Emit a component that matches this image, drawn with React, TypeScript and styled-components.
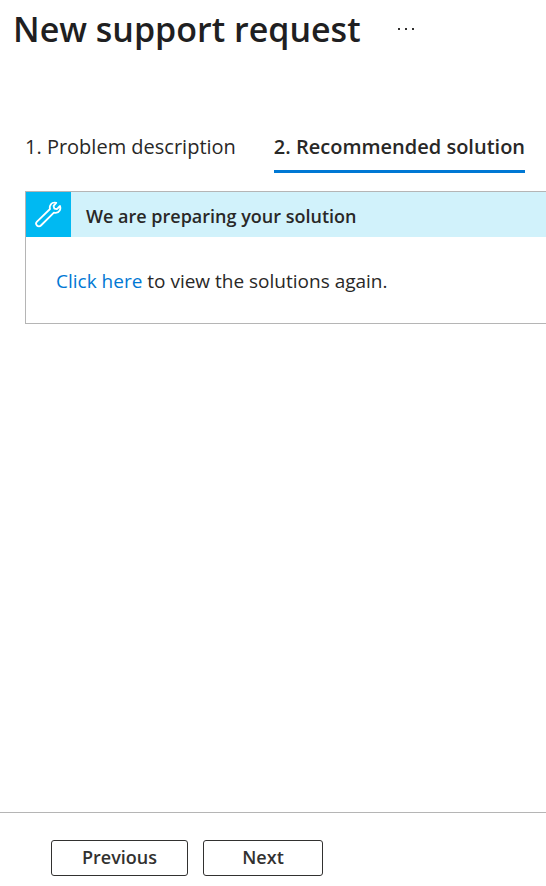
import React from "react";
import styled, { createGlobalStyle } from "styled-components";

const GlobalStyle = createGlobalStyle`
  *, *::before, *::after { box-sizing: border-box; }
  body {
    margin: 0;
    background: #fff;
    color: #292827;
    font-family: "Open Sans", "Noto Sans", sans-serif;
    font-size: 19px;
    line-height: 28px;
  }
`;

const Page = styled.div`
  display: flex;
  flex-direction: column;
  min-height: 100vh;
  overflow-x: hidden;
`;

const Header = styled.header`
  display: flex;
  align-items: center;
  gap: 30px;
  padding: 5px 13px 0;
`;

const Title = styled.h1`
  margin: 0;
  color: #1f1f22;
  font-size: 34px;
  line-height: 48px;
  font-weight: 600;
  white-space: nowrap;
`;

const MoreButton = styled.button`
  display: flex;
  padding: 6px;
  border: 0;
  background: none;
  color: #323130;
  cursor: pointer;
`;

const Main = styled.main`
  flex: 1;
  padding: 80px 0 24px 25px;
`;

const Tabs = styled.div`
  display: flex;
  gap: 38px;
`;

const Tab = styled.button<{ $active?: boolean }>`
  padding: 0 0 9px;
  border: 0;
  border-bottom: 3px solid ${(p) => (p.$active ? "#0078d4" : "transparent")};
  background: none;
  color: inherit;
  font: inherit;
  font-size: 20px;
  font-weight: ${(p) => (p.$active ? 600 : 400)};
  white-space: nowrap;
  cursor: pointer;
`;

const Card = styled.section`
  margin-top: 18px;
  border: 1px solid #b5b5b5;
  border-right: 0;
`;

const CardHeader = styled.div`
  display: flex;
  align-items: center;
  gap: 15px;
  background: #d1f2fb;
`;

const IconTile = styled.span`
  display: flex;
  align-items: center;
  justify-content: center;
  width: 45px;
  height: 45px;
  background: #00b9f2;
`;

const CardTitle = styled.h2`
  margin: 0;
  padding-top: 2px;
  font-size: 18px;
  line-height: 28px;
  font-weight: 600;
`;

const CardText = styled.p`
  margin: 0;
  padding: 30px 30px 28px;
`;

const Link = styled.a`
  color: #0078d4;
  text-decoration: none;
`;

const Footer = styled.footer`
  display: flex;
  gap: 15px;
  padding: 27px 51px 10px;
  border-top: 1px solid #b5b5b5;
`;

const Button = styled.button`
  min-width: 120px;
  height: 36px;
  padding: 0 30px 2px;
  border: 1px solid #323130;
  border-radius: 3px;
  background: #fff;
  color: #323130;
  font: inherit;
  font-size: 18px;
  font-weight: 600;
  cursor: pointer;
`;

const WrenchIcon = () => (
  <svg width="27" height="27" viewBox="0 0 27 27" fill="none" stroke="#fff" strokeWidth="1.8" strokeLinejoin="round" strokeLinecap="round" aria-hidden="true">
    <path d="M21.2 1.8C18.6 1 15.8 2.400 15 5C14.700 6 14.700 7 15 8L2 20.600C.9 21.700 .9 23.400 2 24.500C3.100 25.600 4.800 25.600 5.900 24.500L18.900 11.600C21.100 12.300 23.500 11.400 24.700 9.500C25.500 8.100 25.600 6.600 25 5L21.900 8.100L19.300 7.600L18.600 4.900Z" />
  </svg>
);

const DotsIcon = () => (
  <svg width="18" height="4" viewBox="0 0 18 4" fill="currentColor" aria-hidden="true">
    <rect x="1" y="1" width="2" height="2" />
    <rect x="8" y="1" width="2" height="2" />
    <rect x="15" y="1" width="2" height="2" />
  </svg>
);

export default function App() {
  return (
    <>
      <GlobalStyle />
      <Page>
        <Header>
          <Title>New support request</Title>
          <MoreButton type="button" aria-label="More actions">
            <DotsIcon />
          </MoreButton>
        </Header>
        <Main>
          <Tabs role="tablist">
            <Tab type="button" role="tab" aria-selected={false}>1. Problem description</Tab>
            <Tab type="button" role="tab" aria-selected $active>2. Recommended solution</Tab>
          </Tabs>
          <Card>
            <CardHeader>
              <IconTile>
                <WrenchIcon />
              </IconTile>
              <CardTitle>We are preparing your solution</CardTitle>
            </CardHeader>
            <CardText>
              <Link href="#solutions">Click here</Link> to view the solutions again.
            </CardText>
          </Card>
        </Main>
        <Footer>
          <Button type="button">Previous</Button>
          <Button type="button">Next</Button>
        </Footer>
      </Page>
    </>
  );
}
